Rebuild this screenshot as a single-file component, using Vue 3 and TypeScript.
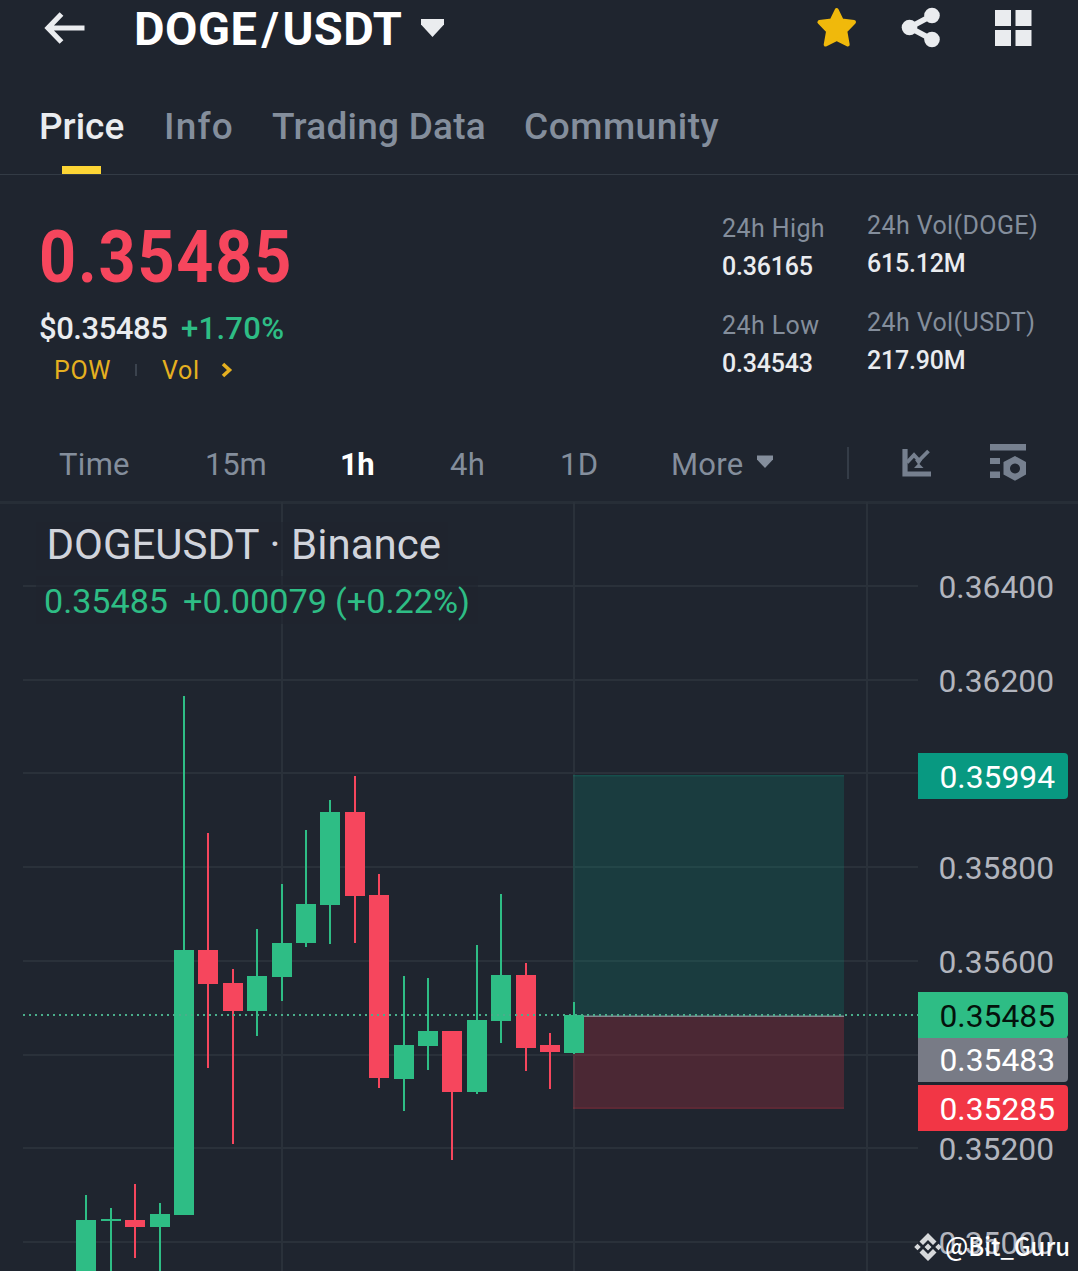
<script setup lang="ts">
interface Candle {
  x: number
  high: number
  low: number
  top: number
  bottom: number
  up: boolean
}

const rows: [number, number, number, number, number, boolean][] = [
  [86, 1195, 1280, 1220, 1280, true],
  [111, 1208, 1280, 1219, 1221, true],
  [135, 1184, 1258, 1220, 1227, false],
  [160, 1203, 1280, 1214, 1227, true],
  [184, 696, 1215, 950, 1215, true],
  [208, 833, 1068, 950, 984, false],
  [233, 969, 1144, 983, 1011, false],
  [257, 929, 1036, 976, 1011, true],
  [282, 884, 1001, 943, 977, true],
  [306, 830, 947, 904, 943, true],
  [330, 800, 944, 812, 905, true],
  [355, 776, 943, 812, 896, false],
  [379, 874, 1088, 895, 1078, false],
  [404, 976, 1111, 1045, 1079, true],
  [428, 978, 1070, 1031, 1046, true],
  [452, 1031, 1160, 1031, 1092, false],
  [477, 945, 1094, 1020, 1092, true],
  [501, 894, 1043, 975, 1021, true],
  [526, 963, 1071, 975, 1048, false],
  [550, 1033, 1089, 1045, 1052, false],
  [574, 1002, 1054, 1015, 1053, true],
]
const candles: Candle[] = rows.map(([x, high, low, top, bottom, up]) => ({ x, high, low, top, bottom, up }))

const gridY = [586, 680, 773, 867, 961, 1055, 1148, 1242]
const gridX = [282, 574, 867]

const axis = [
  { y: 598, text: '0.36400' },
  { y: 692, text: '0.36200' },
  { y: 879, text: '0.35800' },
  { y: 973, text: '0.35600' },
  { y: 1160, text: '0.35200' },
  { y: 1254, text: '0.35000' },
]

const tags = [
  { y: 753, h: 46, base: 788, text: '0.35994', fill: '#089981', ink: '#ffffff' },
  { y: 1036, h: 46, base: 1071, text: '0.35483', fill: '#787b86', ink: '#ffffff' },
  { y: 992, h: 46, base: 1027, text: '0.35485', fill: '#2ebd85', ink: '#04120c' },
  { y: 1085, h: 46, base: 1120, text: '0.35285', fill: '#f23645', ink: '#ffffff' },
]

const tabs = [
  { id: 'price', label: 'Price' },
  { id: 'info', label: 'Info' },
  { id: 'trading', label: 'Trading Data' },
  { id: 'community', label: 'Community' },
]

const frames = [
  { id: 'time', label: 'Time' },
  { id: 'm15', label: '15m' },
  { id: 'h1', label: '1h' },
  { id: 'h4', label: '4h' },
  { id: 'd1', label: '1D' },
]
</script>

<template>
  <main class="screen">
    <header class="bar">
      <svg class="back" width="42" height="34" viewBox="0 0 42 34">
        <path d="M40.500 17H4M17.500 3L4 17l13.500 14" fill="none" stroke="#eaecef" stroke-width="5.200" />
      </svg>
      <h1 class="pair">DOGE<span class="slash">/</span>USDT</h1>
      <svg class="caret" width="26" height="20" viewBox="0 0 26 20">
        <path d="M1 1H24V6.500L12.500 19L1 6.500Z" fill="#eaecef" />
      </svg>
      <span class="grow"></span>
      <svg class="star" width="42" height="42" viewBox="0 0 42 42">
        <path d="M20.700 2.500L25.800 13L38 14.600L29.300 23.500L31.700 37L20.700 31.400L9.700 37L12.100 23.500L3.400 14.600L15.600 13Z" transform="translate(0 .5)" fill="#f0b90b" stroke="#f0b90b" stroke-width="4" stroke-linejoin="round" />
      </svg>
      <svg class="share" width="40" height="42" viewBox="0 0 40 42">
        <path d="M31 8.500L8.500 20.500L31 32.500" fill="none" stroke="#eaecef" stroke-width="5.500" />
        <circle cx="8.500" cy="20.500" r="7.800" fill="#eaecef" />
        <circle cx="31" cy="8.500" r="7.800" fill="#eaecef" />
        <circle cx="31" cy="32.500" r="7.800" fill="#eaecef" />
      </svg>
      <svg class="tiles" width="37" height="37" viewBox="0 0 37 37">
        <path d="M0 0h16v16H0zM20.500 0h16v16h-16zM0 20h16v16H0zM20.500 20h16v16h-16z" fill="#eaecef" />
      </svg>
    </header>

    <nav class="tabs">
      <span v-for="t in tabs" :key="t.id" class="tab" :class="t.id">{{ t.label }}</span>
    </nav>

    <section class="ticker">
      <div class="quote">
        <div class="last">0.35485</div>
        <div class="sub"><span class="usd">$0.35485</span><span class="chg">+1.70%</span></div>
        <div class="labels">
          <span class="pow">POW</span><i class="sep"></i><span class="vol">Vol</span>
          <svg width="12" height="16" viewBox="0 0 12 16">
            <path d="M2 2L8.500 8L2 14" fill="none" stroke="#e5b020" stroke-width="3.600" />
          </svg>
        </div>
      </div>
      <dl class="stats left">
        <dt class="k-high">24h High</dt>
        <dd>0.36165</dd>
        <dt class="k-low">24h Low</dt>
        <dd>0.34543</dd>
      </dl>
      <dl class="stats right">
        <dt class="k-base">24h Vol(DOGE)</dt>
        <dd>615.12M</dd>
        <dt class="k-quote">24h Vol(USDT)</dt>
        <dd>217.90M</dd>
      </dl>
    </section>

    <nav class="frames">
      <span v-for="f in frames" :key="f.id" class="frame" :class="f.id">{{ f.label }}</span>
      <span class="frame more">More</span>
      <svg class="mcaret" width="18" height="14" viewBox="0 0 18 14">
        <path d="M1 .5H17V4.500L9 13L1 4.500Z" fill="#848e9c" />
      </svg>
      <i class="rule"></i>
      <svg class="ind" width="30" height="30" viewBox="0 0 30 30">
        <path d="M3 1V26H29" fill="none" stroke="#76808f" stroke-width="5.200" />
        <path d="M5 14.500L12 7L17 12.500L26.500 3" fill="none" stroke="#76808f" stroke-width="3.800" />
        <path d="M13 12H20L17.500 16L21.500 20H12L15.800 16Z" fill="#76808f" />
      </svg>
      <svg class="cfg" width="37" height="37" viewBox="0 0 37 37">
        <path d="M0 0h36v6.500H0zM0 14h10v6H0zM0 27.500h10v6.500H0z" fill="#76808f" />
        <path fill-rule="evenodd" d="M25 12L36 18V30.500L25 36.800L13.500 30.500V18ZM25 19.500a5 5 0 1 0 .01 0Z" fill="#76808f" />
      </svg>
    </nav>

    <svg class="chart" width="1078" height="771" viewBox="0 500 1078 771">
      <rect x="0" y="501" width="1078" height="3" fill="#272e37" />
      <rect v-for="y in gridY" :key="y" x="23" :y="y - 1" width="895" height="2" fill="#2a313a" />
      <rect v-for="x in gridX" :key="x" :x="x - 1" y="502" width="2" height="769" fill="#2a313a" />

      <rect x="573" y="775" width="271" height="241" fill="#089981" fill-opacity=".2" />
      <rect x="573" y="1017" width="271" height="92" fill="#f23645" fill-opacity=".21" />
      <rect x="573" y="775" width="271" height="1.500" fill="#089981" fill-opacity=".2" />
      <rect x="573" y="1107" width="271" height="2" fill="#f23645" fill-opacity=".1" />
      <rect x="573" y="1015.500" width="271" height="1.500" fill="#838a90" />

      <g v-for="c in candles" :key="c.x" :fill="c.up ? '#2ebd85' : '#f6465d'">
        <rect :x="c.x - 1" :y="c.high" width="2" :height="c.low - c.high" />
        <rect :x="c.x - 10" :y="c.top" width="20" :height="c.bottom - c.top" />
      </g>
      <path d="M23 1015H918" stroke="#4aae8b" stroke-width="2" stroke-dasharray="2 4" />

      <rect x="36" y="522" width="412" height="48" fill="#1f252f" fill-opacity=".6" />
      <rect x="36" y="576" width="442" height="48" fill="#1f252f" fill-opacity=".6" />
      <g fill="#d1d4dc" font-size="42">
        <text x="46.500" y="559" textLength="213">DOGEUSDT</text>
        <text x="269.500" y="559">·</text>
        <text x="291" y="559" textLength="150">Binance</text>
      </g>
      <g fill="#2ebd85" font-size="33.500">
        <text x="44" y="613" textLength="124" lengthAdjust="spacingAndGlyphs">0.35485</text>
        <text x="183" y="613" textLength="144" lengthAdjust="spacingAndGlyphs">+0.00079</text>
        <text x="335" y="613" textLength="135" lengthAdjust="spacingAndGlyphs">(+0.22%)</text>
      </g>

      <g fill="#b2b5be" font-size="31">
        <text v-for="a in axis" :key="a.text" x="938.500" :y="a.y" textLength="115.500" lengthAdjust="spacingAndGlyphs">{{ a.text }}</text>
      </g>
      <g v-for="t in tags" :key="t.text" font-size="31">
        <path :d="`M918 ${t.y}h146q4 0 4 4v${t.h - 8}q0 4 -4 4h-146z`" :fill="t.fill" />
        <text x="939.500" :y="t.base" textLength="115.500" lengthAdjust="spacingAndGlyphs" :fill="t.ink">{{ t.text }}</text>
      </g>

      <g fill="#d6d8da">
        <path d="M928 1233l8.500 8.500l-3.500 3.500l-5-5l-5 5l-3.500-3.500zM928 1261l8.500-8.500l-3.500-3.500l-5 5l-5-5l-3.500 3.500zM928 1243.500l3.500 3.500l-3.500 3.500l-3.500-3.500zM917.500 1243.700l3.300 3.300l-3.300 3.300l-3.300-3.300zM938.500 1243.700l3.300 3.300l-3.300 3.300l-3.300-3.300z" />
      </g>
      <text class="mark" x="945" y="1256" textLength="125" lengthAdjust="spacingAndGlyphs" fill="#ffffff" font-size="25">@Bit_Guru</text>
    </svg>
  </main>
</template>

<style>
body {
  background: #1f252f;
}
</style>

<style scoped>
.screen {
  width: 1078px;
  height: 1271px;
  overflow: hidden;
  display: flex;
  flex-direction: column;
  background: #1f252f;
  color: #eaecef;
  font-family: Roboto, "Liberation Sans", sans-serif;
  white-space: nowrap;
}
svg {
  display: block;
  flex: none;
}
.bar {
  height: 56px;
  display: flex;
  align-items: center;
  padding: 0 46px 0 44px;
}
.pair {
  margin: 2px 0 0 48px;
  width: 267px;
  color: #fff;
  font-size: 47px;
  line-height: 56px;
  font-weight: 700;
  letter-spacing: 0.5px;
}
.slash {
  margin: 0 3px 0 4px;
}
.caret {
  margin-left: 19px;
}
.grow {
  flex: 1;
}
.star {
  margin-right: -1px;
}
.share {
  margin-left: 44px;
}
.tiles {
  margin-left: 54px;
}
.tabs {
  box-sizing: border-box;
  height: 119px;
  padding: 47px 0 0 39px;
  display: flex;
  border-bottom: 1px solid #333b45;
  color: #848e9c;
  font-size: 37px;
  line-height: 48px;
  font-weight: 500;
}
.tab.price {
  position: relative;
  width: 125px;
  color: #eaecef;
}
.tab.price::after {
  content: "";
  position: absolute;
  left: 23px;
  bottom: 0;
  width: 39px;
  height: 8px;
  background: #fcd535;
}
.tab.info {
  width: 108px;
  letter-spacing: 1.2px;
}
.tab.trading {
  width: 252px;
  letter-spacing: 0.25px;
}
.tab.community {
  letter-spacing: 0.5px;
}
.ticker {
  height: 251px;
  display: flex;
}
.quote {
  box-sizing: border-box;
  width: 684px;
  padding: 40px 0 0 39px;
  flex: none;
}
.last {
  height: 84px;
  color: #f6465d;
  font-size: 73px;
  line-height: 84px;
  font-weight: 700;
  letter-spacing: 2px;
  transform: scaleX(0.887);
  transform-origin: 0 0;
}
.sub {
  display: flex;
  height: 40px;
  margin-top: 10px;
  font-size: 31px;
  line-height: 40px;
  font-weight: 500;
}
.usd {
  width: 142px;
  letter-spacing: -0.45px;
}
.chg {
  color: #2ebd85;
  letter-spacing: 0.3px;
}
.labels {
  display: flex;
  align-items: center;
  height: 36px;
  margin-top: 3px;
  padding-left: 15px;
  color: #e5b020;
  font-size: 25px;
  line-height: 36px;
}
.pow,
.vol {
  padding-top: 2px;
}
.pow {
  width: 81px;
  letter-spacing: 0.7px;
}
.sep {
  width: 2px;
  height: 12px;
  margin-right: 25px;
  background: #3b434e;
}
.vol {
  width: 59px;
  letter-spacing: 0.7px;
}
.stats {
  margin: 0;
  flex: none;
  font-size: 25px;
}
.stats.left {
  width: 145px;
  margin-left: 38px;
  padding-top: 36px;
}
.stats.right {
  padding-top: 33px;
}
dt {
  height: 36px;
  line-height: 36px;
  color: #848e9c;
  letter-spacing: 0.4px;
}
dd {
  height: 38px;
  line-height: 39px;
  margin: 0 0 23px;
  color: #eaecef;
  font-weight: 500;
  letter-spacing: -0.2px;
}
.frames {
  height: 74px;
  display: flex;
  align-items: center;
  padding: 0 0 0 59px;
  color: #848e9c;
  font-size: 31px;
  line-height: 74px;
}
.frame {
  padding-top: 3px;
  letter-spacing: 0.3px;
}
.time {
  width: 146px;
}
.m15 {
  width: 135px;
  letter-spacing: -0.2px;
}
.h1 {
  width: 110px;
  color: #fff;
  font-weight: 700;
  letter-spacing: -0.6px;
}
.h4 {
  width: 110px;
}
.d1 {
  width: 111px;
}
.more {
  width: 85px;
}
.mcaret {
  margin-top: -2px;
}
.rule {
  width: 2px;
  height: 32px;
  margin: 0 53px 0 73px;
  background: #343c47;
}
.ind,
.cfg {
  margin-top: -1px;
}
.cfg {
  margin-left: 58px;
}
.chart {
  font-family: Roboto, "Liberation Sans", sans-serif;
}
.mark {
  font-family: "Noto Sans CJK SC", "Noto Sans", sans-serif;
  font-weight: 500;
}
</style>
